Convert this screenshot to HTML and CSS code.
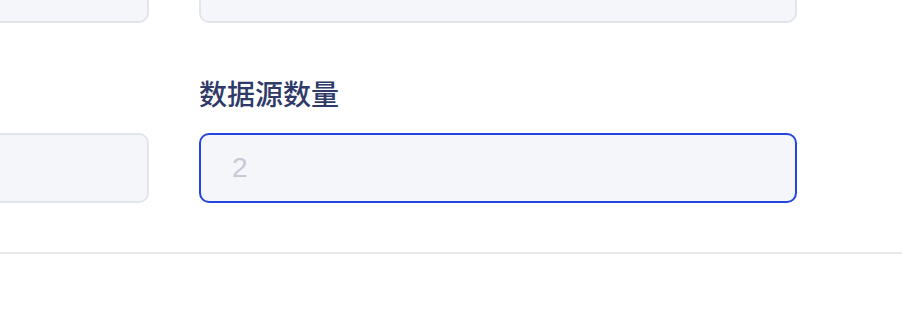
FILE: index.html
```html
<!DOCTYPE html>
<html lang="zh-CN">
<head>
<meta charset="utf-8">
<title>数据源设置</title>
<link rel="stylesheet" href="styles.css">
</head>
<body>
<div class="page">
  <form class="form">
    <div class="field">
      <label class="field-label">数据源名称</label>
      <input class="field-input" type="text">
    </div>
    <div class="field">
      <label class="field-label">数据源类型</label>
      <input class="field-input" type="text">
    </div>
    <div class="field">
      <label class="field-label">数据源地址</label>
      <input class="field-input" type="text">
    </div>
    <div class="field">
      <label class="field-label">数据源数量</label>
      <input class="field-input is-focused" type="text" placeholder="2">
    </div>
  </form>
  <hr class="divider">
</div>
</body>
</html>
```

FILE: styles.css
```css
html, body {
  margin: 0;
  padding: 0;
  background: #ffffff;
  overflow: hidden;
}

body {
  width: 902px;
  height: 326px;
  font-family: "Liberation Sans", "Noto Sans CJK SC", sans-serif;
}

.page {
  display: flex;
  flex-direction: column;
}

.form {
  display: grid;
  grid-template-columns: 598px 598px;
  column-gap: 50px;
  row-gap: 50px;
  margin-top: -107px;
  margin-left: -449px;
}

.field {
  display: flex;
  flex-direction: column;
}

.field-label {
  align-self: flex-start;
  font-family: "Noto Sans CJK SC", sans-serif;
  font-size: 28px;
  line-height: 40px;
  font-weight: 500;
  color: #2f3a6a;
  margin-bottom: 20px;
}

.field-input {
  box-sizing: border-box;
  height: 70px;
  width: 100%;
  padding: 0 31px;
  border: 2px solid #e2e5ee;
  border-radius: 10px;
  background: #f5f6fa;
  font-family: "Liberation Sans", "Noto Sans CJK SC", sans-serif;
  font-size: 28px;
  color: #2f3a6a;
  outline: none;
}

.field-input::placeholder {
  color: #c6c9d6;
}

.field-input.is-focused {
  border-color: #2347de;
}

.divider {
  margin: 49px 0 0;
  height: 2px;
  border: 0;
  background: #e7e9ef;
}
```
